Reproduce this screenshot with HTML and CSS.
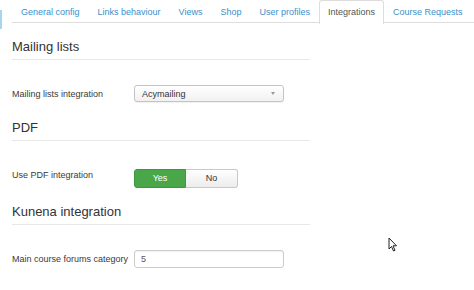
FILE: index.html
```html
<!DOCTYPE html>
<html lang="en">
<head>
    <meta charset="UTF-8">
    <meta name="viewport" content="width=device-width, initial-scale=1.0">
    <title>Integrations</title>
    <link rel="stylesheet" href="styles.css">
</head>
<body>
    <div class="edge"><span class="edge-mark"></span></div>
    <div class="main">
        <ul class="tabs">
            <li><a href="#">General config</a></li>
            <li><a href="#">Links behaviour</a></li>
            <li><a href="#">Views</a></li>
            <li><a href="#">Shop</a></li>
            <li><a href="#">User profiles</a></li>
            <li class="active"><a href="#">Integrations</a></li>
            <li><a href="#">Course Requests</a></li>
        </ul>

        <div class="form">
            <h3 class="legend">Mailing lists</h3>
            <div class="field">
                <label class="field-label">Mailing lists integration</label>
                <div class="select">
                    <span>Acymailing</span>
                    <span class="caret"></span>
                </div>
            </div>

            <h3 class="legend">PDF</h3>
            <div class="field">
                <label class="field-label">Use PDF integration</label>
                <div class="toggle">
                    <span class="toggle-btn on">Yes</span>
                    <span class="toggle-btn">No</span>
                </div>
            </div>

            <h3 class="legend">Kunena integration</h3>
            <div class="field">
                <label class="field-label" for="forumcat">Main course forums category</label>
                <input class="text-input" type="text" id="forumcat" value="5">
            </div>
        </div>
    </div>

    <svg class="cursor" width="10" height="15" viewBox="0 0 10 15">
        <path d="M1 1 L1 12 L3.5 9.5 L5.5 14 L7 13.3 L5 8.8 L8.5 8.8 Z" fill="#fff" stroke="#222" stroke-width="1" stroke-linejoin="round"/>
    </svg>
</body>
</html>
```

FILE: styles.css
```css
body {
    font-family: "Liberation Sans", Arial, sans-serif;
    background-color: #fff;
    color: #333;
    margin: 0;
    padding: 0;
    display: flex;
}

.edge {
    width: 2px;
    flex: none;
}

.edge-mark {
    display: block;
    margin-top: 10px;
    height: 19px;
    background-color: #a9d4ee;
}

.main {
    flex: 1;
    min-width: 0;
    padding-left: 10px;
}

/* tabs */
.tabs {
    list-style: none;
    margin: 0;
    padding: 0;
    display: flex;
    border-bottom: 1px solid #ddd;
    height: 22px;
}

.tabs li {
    flex: none;
    white-space: nowrap;
    margin-bottom: -1px;
}

.tabs a {
    display: block;
    padding: 0 8px;
    line-height: 22px;
    font-size: 9px;
    color: #3a90cc;
    text-decoration: none;
    border: 1px solid transparent;
    border-bottom: 0;
    border-radius: 3px 3px 0 0;
}

.tabs li.active a {
    color: #555;
    background-color: #fff;
    border-color: #ddd;
    height: 23px;
}

/* form */
.form {
    width: 298px;
}

.legend {
    font-size: 13px;
    font-weight: normal;
    line-height: 16px;
    color: #333;
    margin: 16px 0 0;
    padding-bottom: 4px;
    border-bottom: 1px solid #e8e8e8;
}

.field {
    display: flex;
    align-items: flex-start;
    margin-top: 24px;
    min-height: 20px;
}

.field-label {
    width: 122px;
    flex: none;
    font-size: 9px;
    line-height: 20px;
    color: #3a3a3a;
}

.select {
    box-sizing: border-box;
    width: 150px;
    height: 17px;
    margin-top: 1px;
    padding: 0 7px;
    display: flex;
    align-items: center;
    justify-content: space-between;
    font-size: 9px;
    color: #333;
    border: 1px solid #c4c4c4;
    border-radius: 3px;
    background: linear-gradient(#fff, #f1f1f1);
    box-shadow: 0 1px 1px rgba(0, 0, 0, 0.06);
}

.caret {
    width: 0;
    height: 0;
    border-left: 2px solid transparent;
    border-right: 2px solid transparent;
    border-top: 3px solid #999;
    margin-right: 1px;
}

.toggle {
    display: flex;
    margin-top: 4px;
}

.toggle-btn {
    box-sizing: border-box;
    width: 52px;
    height: 19px;
    line-height: 17px;
    text-align: center;
    font-size: 9px;
    color: #333;
    border: 1px solid #c8c8c8;
    background: linear-gradient(#fff, #ececec);
}

.toggle-btn:first-child {
    border-radius: 3px 0 0 3px;
}

.toggle-btn:last-child {
    border-radius: 0 3px 3px 0;
    border-left: 0;
}

.toggle-btn.on {
    color: #fff;
    background: #49a749;
    border-color: #3f963f;
}

.text-input {
    box-sizing: border-box;
    width: 150px;
    height: 18px;
    margin: 1px 0 0;
    padding: 0 6px;
    font-family: inherit;
    font-size: 9px;
    color: #555;
    border: 1px solid #ccc;
    border-radius: 3px;
    box-shadow: inset 0 1px 1px rgba(0, 0, 0, 0.06);
}

.cursor {
    position: absolute;
    left: 388px;
    top: 237px;
}
```
